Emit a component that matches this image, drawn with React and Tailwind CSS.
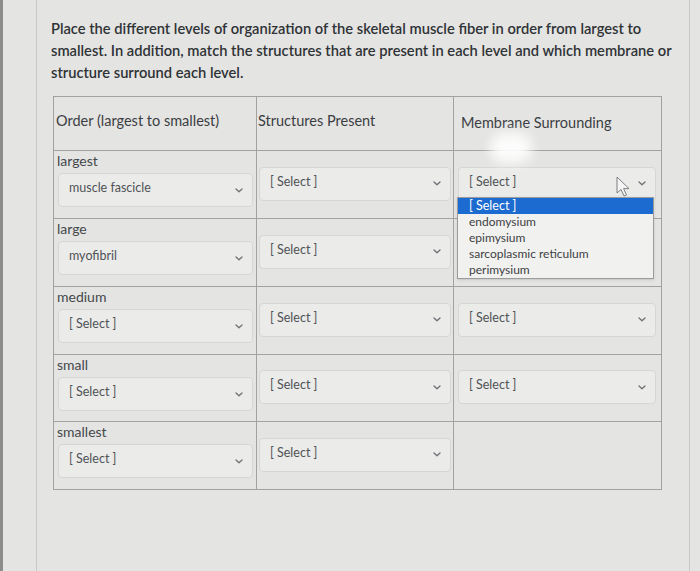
import React from 'react';

const font = { fontFamily: 'Lato, "Open Sans", "Noto Sans", sans-serif' };

function Chevron() {
  return (
    <svg width="10" height="7" viewBox="0 0 10 7" className="shrink-0">
      <path d="M2 2 L5 4.8 L8 2" fill="none" stroke="#6b6f73" strokeWidth="1.3" strokeLinecap="round" strokeLinejoin="round" />
    </svg>
  );
}

function Select({ value = '[ Select ]', className = '' }) {
  return (
    <div className={`flex h-[34px] items-center justify-between rounded-[4px] border border-[#d6d6d4] bg-[#ebebe9] pl-[10px] pr-[8px] text-[12.5px] text-[#4f5256] ${className}`}>
      <span className="-mt-[3px]">{value}</span>
      <Chevron />
    </div>
  );
}

function Cursor() {
  return (
    <svg width="16" height="22" viewBox="0 0 16 22" className="pointer-events-none absolute left-[616px] top-[176px]">
      <path d="M1 1 L1 17 L5 13.5 L8 20 L10.5 19 L7.6 12.6 L13 12.6 Z" fill="#f4f4f4" stroke="#7d7f82" strokeWidth="1" strokeLinejoin="round" />
    </svg>
  );
}

// membrane: 'show' | 'covered' (under the open list) | 'none'
const rows = [
  { label: 'largest', order: 'muscle fascicle', membrane: 'show', h: 'h-[68px]' },
  { label: 'large', order: 'myofibril', membrane: 'covered', h: 'h-[68px]' },
  { label: 'medium', order: '[ Select ]', membrane: 'show', h: 'h-[68px]' },
  { label: 'small', order: '[ Select ]', membrane: 'show', h: 'h-[66px]' },
  { label: 'smallest', order: '[ Select ]', membrane: 'none', h: 'h-[68px]' },
];

export default function App() {
  return (
    <div className="relative h-[571px] w-[700px] overflow-hidden bg-[#e4e4e2]" style={font}>
      <div className="absolute left-0 top-0 h-full w-[3px] bg-[#8c8c8c]" />
      <div className="ml-[36px] mr-[10px] h-full border-l border-r border-[#c9c9c7] pl-[14px] pt-[17px]">
        <p className="w-[625px] text-[14.7px] font-semibold leading-[22px] text-[#2f3336]">
          Place the different levels of organization of the skeletal muscle fiber in order from largest to smallest. In addition, match the structures that are present in each level and which membrane or structure surround each level.
        </p>

        <table className="ml-[2px] mt-[13px] border-collapse text-[#3b3e42]">
          <thead>
            <tr className="h-[54px]">
              <th className="w-[203px] border border-[#a2a2a0] pb-[5px] pl-[2px] text-left align-middle text-[14.5px] font-normal">Order (largest to smallest)</th>
              <th className="w-[197px] border border-[#a2a2a0] pb-[5px] pl-[1px] text-left align-middle text-[14.5px] font-normal">Structures Present</th>
              <th className="w-[208px] border border-[#a2a2a0] pb-[1px] pl-[7px] text-left align-middle text-[14.5px] font-normal">Membrane Surrounding</th>
            </tr>
          </thead>
          <tbody>
            {rows.map((r) => (
              <tr key={r.label} className={r.h}>
                <td className="border border-[#a2a2a0] px-0 align-top">
                  <div className="flex flex-col pb-[10px] pl-[3px] pr-[3px] pt-[1px]">
                    <span className="text-[14px] leading-[18px] text-[#45484c]">{r.label}</span>
                    <Select value={r.order} className="ml-[1px] mt-[3px]" />
                  </div>
                </td>
                <td className="border border-[#a2a2a0] px-[2px] align-middle">
                  <Select className="-mt-[2px]" />
                </td>
                <td className="border border-[#a2a2a0] pl-[4px] pr-[5px] align-middle">
                  {r.membrane === 'show' && <Select className="-mt-[2px]" />}
                  {r.membrane === 'covered' && <Select className="invisible -mt-[2px]" />}
                </td>
              </tr>
            ))}
          </tbody>
        </table>
      </div>

      {/* open dropdown list */}
      <div className="absolute left-[457px] top-[197px] w-[197px] border border-[#9c9c9c] bg-[#f1f1ef] text-[12px] leading-[16px] text-[#3e4145] shadow-sm">
        <div className="bg-[#1b6bd0] pl-[11px] text-[12.5px] text-white">[ Select ]</div>
        <div className="pl-[11px]">endomysium</div>
        <div className="pl-[11px]">epimysium</div>
        <div className="pl-[11px]">sarcoplasmic reticulum</div>
        <div className="pl-[11px]">perimysium</div>
      </div>

      {/* screen glare */}
      <div className="pointer-events-none absolute left-[490px] top-[133px] h-[30px] w-[42px] rounded-full bg-white opacity-90 blur-[6px]" />

      <Cursor />
    </div>
  );
}
